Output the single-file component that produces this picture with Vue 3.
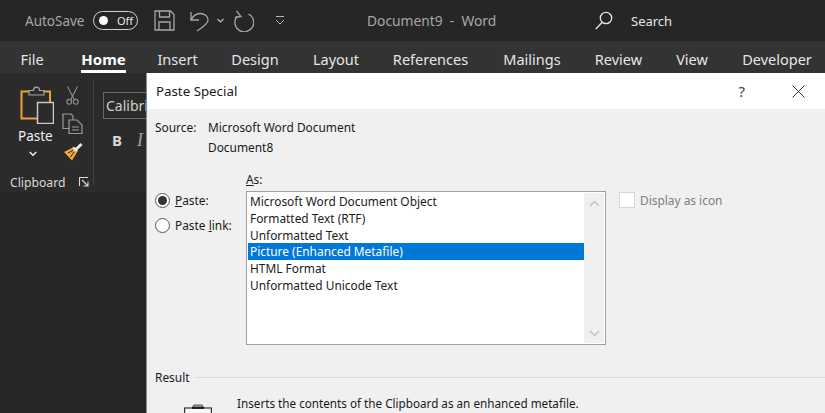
<script setup>
const tabs = [
  { label: 'File', w: 24, gap: 37 },
  { label: 'Home', w: 45, gap: 32, active: true },
  { label: 'Insert', w: 39, gap: 34 },
  { label: 'Design', w: 48, gap: 34 },
  { label: 'Layout', w: 46, gap: 35 },
  { label: 'References', w: 73, gap: 36 },
  { label: 'Mailings', w: 58, gap: 34 },
  { label: 'Review', w: 47, gap: 34 },
  { label: 'View', w: 32, gap: 33 },
  { label: 'Developer', w: 72, gap: 0 }
]
const formats = [
  'Microsoft Word Document Object',
  'Formatted Text (RTF)',
  'Unformatted Text',
  'Picture (Enhanced Metafile)',
  'HTML Format',
  'Unformatted Unicode Text'
]
</script>

<template>
  <div class="app">
    <header class="titlebar">
      <span class="autosave">AutoSave</span>
      <span class="toggle"><i class="knob"></i><span>Off</span></span>
      <svg class="save" width="21" height="21" viewBox="0 0 21 21" fill="none" stroke="#a6a6a6" stroke-width="1.3">
        <path d="M1 1h15.500L20 4.500V20H1z" />
        <path d="M5.500 1v6h10V1M5 20v-8h11v8" />
      </svg>
      <svg class="undo" width="20" height="22" viewBox="0 0 20 22" fill="none" stroke="#a6a6a6" stroke-width="1.3">
        <path d="M1 2v8h8" />
        <path d="M1 10c2-4 5-6.500 9-6.500 4.500 0 8 2.500 8 6.500 0 3-3 6-11 11" />
      </svg>
      <svg class="chev" width="7" height="5" viewBox="0 0 7 5" fill="none" stroke="#bdbdbd" stroke-width="1.200"><path d="M.5 1l3 3 3-3" /></svg>
      <svg class="redo" width="21" height="22" viewBox="0 0 21 22" fill="none" stroke="#a6a6a6" stroke-width="1.300">
        <path d="M3.500 1L8 6.500 2 7.500" />
        <path d="M4 6.500A9.400 9.400 0 1 0 15.500 4" />
      </svg>
      <svg class="custom" width="10" height="9" viewBox="0 0 10 9" fill="none" stroke="#b5b5b5" stroke-width="1">
        <path d="M1 .5h8M1 4l4 4 4-4" />
      </svg>
      <span class="doc">Document9 &nbsp;-&nbsp; Word</span>
      <svg class="search-icon" width="18" height="19" viewBox="0 0 18 19" fill="none" stroke="#e6e6e6" stroke-width="1.300">
        <circle cx="11" cy="7" r="5.700" />
        <path d="M7 11.500L.8 18" />
      </svg>
      <span class="search">Search</span>
    </header>

    <nav class="tabs">
      <span
        v-for="t in tabs"
        :key="t.label"
        class="tab"
        :class="{ active: t.active }"
        :style="{ width: t.w + 'px', marginRight: t.gap + 'px' }"
      >{{ t.label }}</span>
    </nav>

    <section class="ribbon">
      <div class="clipboard">
        <div class="clip-body">
          <div class="paste-col">
            <svg width="34" height="38" viewBox="0 0 34 38" fill="none">
              <path d="M9 5.500H1.500V32.500H17" stroke="#e8a33d" stroke-width="2" />
              <path d="M24 5.500h6V16" stroke="#e8a33d" stroke-width="2" />
              <path d="M9 9V4.500h4.500c0-4.500 6-4.500 6 0H24V9z" stroke="#a6a6a6" stroke-width="1.200" />
              <rect x="17.500" y="16.500" width="16" height="21" fill="#2b2b2b" stroke="#c8c8c8" stroke-width="1.500" />
            </svg>
            <span class="paste-label">Paste</span>
            <svg class="paste-chev" width="8" height="6" viewBox="0 0 8 6" fill="none" stroke="#f0f0f0" stroke-width="1.500"><path d="M.7 1l3.300 3.300L7.300 1" /></svg>
          </div>
          <div class="tools">
            <svg width="13" height="19" viewBox="0 0 13 19" fill="none" stroke="#8f8f8f" stroke-width="1.100">
              <path d="M1.500 .5L8.500 14M11.500 .5L4.500 14" />
              <circle cx="3.200" cy="15.800" r="2.400" />
              <circle cx="9.800" cy="15.800" r="2.400" />
            </svg>
            <svg width="21" height="21" viewBox="0 0 21 21" fill="none" stroke="#9a9a9a" stroke-width="1.200">
              <path d="M7 15.500H1V1h8l2 2v4" />
              <path d="M7 7h8l5 5v8.500H7z" />
              <path d="M10 14h7M10 17h7" />
            </svg>
            <svg width="20" height="19" viewBox="0 0 20 19" fill="none">
              <path d="M13.500 7L18.500 2" stroke="#e6e6e6" stroke-width="3" />
              <path d="M1 10l10-5 3.500 4.500L9 18.500z" fill="#eda73c" />
              <path d="M9.500 4.500l4 1.500 1.500 3.500-3.500-1z" fill="#f0f0f0" />
              <path d="M5 11l5-2.500M7.500 15l3.500-5" stroke="#2b2b2b" stroke-width="1" />
            </svg>
          </div>
        </div>
        <div class="clip-footer">
          <span>Clipboard</span>
          <svg width="10" height="10" viewBox="0 0 10 10" fill="none" stroke="#dcdcdc" stroke-width="1.100">
            <path d="M.5 9V.5H9" />
            <path d="M3 3l6 6M9 4.500V9H4.500" />
          </svg>
        </div>
      </div>
      <div class="font-group">
        <span class="font-box">Calibri</span>
        <div class="font-styles"><b>B</b><i>I</i></div>
      </div>
    </section>

    <main class="below"></main>

    <div class="dialog">
      <div class="dlg-head">
        <span class="dlg-title">Paste Special</span>
        <span class="help">?</span>
        <svg width="13" height="13" viewBox="0 0 13 13" stroke="#333" stroke-width="1" fill="none"><path d="M.5.500l12 12M12.500.500l-12 12" /></svg>
      </div>
      <div class="dlg-body">
        <div class="source">
          <span class="src-label">Source:</span>
          <div class="src-values">
            <span>Microsoft Word Document</span>
            <span>Document8</span>
          </div>
        </div>
        <div class="main-row">
          <div class="radios">
            <label class="radio"><i class="dot on"></i><span><u>P</u>aste:</span></label>
            <label class="radio"><i class="dot"></i><span>Paste <u>l</u>ink:</span></label>
          </div>
          <div class="as-col">
            <span class="as"><u>A</u>s:</span>
            <div class="listbox">
              <ul class="items">
                <li v-for="f in formats" :key="f" :class="{ sel: f.startsWith('Picture') }">{{ f }}</li>
              </ul>
              <div class="scroll">
                <svg width="11" height="7" viewBox="0 0 11 7" fill="none" stroke="#c0c0c0" stroke-width="1.500"><path d="M1 6l4.500-4.500L10 6" /></svg>
                <svg width="11" height="7" viewBox="0 0 11 7" fill="none" stroke="#c0c0c0" stroke-width="1.500"><path d="M1 1l4.500 4.500L10 1" /></svg>
              </div>
            </div>
          </div>
          <div class="icon-opt"><i class="check"></i><span>Display as icon</span></div>
        </div>
        <div class="result-head"><span>Result</span><i class="rule"></i></div>
        <div class="result-row">
          <svg class="res-icon" width="28" height="20" viewBox="0 0 28 20" fill="#f8f8f8" stroke="#333" stroke-width="1.200">
            <path d="M8 4l2-3h8l2 3" fill="#8a8a8a" stroke="#666" />
            <rect x=".6" y="4" width="26.800" height="20" />
            <path d="M8 4h12" stroke="#111" stroke-width="1.600" />
          </svg>
          <p>Inserts the contents of the Clipboard as an enhanced metafile.</p>
        </div>
      </div>
    </div>
  </div>
</template>

<style>
html, body { margin: 0; background: #262626; overflow: hidden; }
</style>

<style scoped>
.app {
  position: relative;
  width: 825px;
  height: 413px;
  overflow: hidden;
  display: flex;
  flex-direction: column;
  background: #262626;
  font-family: "Noto Sans", "Open Sans", sans-serif;
}
.titlebar {
  height: 41px;
  flex: none;
  display: flex;
  align-items: center;
  background: #262626;
  color: #a6a6a6;
  font-size: 14px;
}
.autosave { margin-left: 25px; width: 60px; font-size: 13.5px; white-space: nowrap; }
.toggle {
  margin-left: 8px;
  width: 45px;
  height: 19px;
  box-sizing: border-box;
  border: 1.3px solid #d0d0d0;
  border-radius: 10px;
  display: flex;
  align-items: center;
  color: #e6e6e6;
  font-size: 11px;
}
.knob { width: 9px; height: 9px; background: #fff; border-radius: 50%; margin: 0 9px 0 5px; }
.save { margin-left: 16px; }
.undo { margin-left: 15px; }
.chev { margin-left: 7px; }
.redo { margin-left: 9px; }
.custom { margin-left: 21px; }
.doc { margin-left: 82px; width: 228px; font-size: 13.8px; white-space: nowrap; }
.search { margin-left: 18px; color: #e6e6e6; font-size: 13px; }

.tabs {
  height: 32px;
  flex: none;
  padding-left: 20px;
  display: flex;
  align-items: center;
  background: #333;
  color: #e6e6e6;
  font-size: 14.5px;
  position: relative;
}
.tab { position: relative; height: 32px; line-height: 36px; white-space: nowrap; display: flex; justify-content: center; }
.tab.active { color: #fff; font-weight: 700; font-size: 15px; }
.tab.active::after {
  content: "";
  position: absolute;
  left: 0; right: 0; bottom: 0;
  height: 3px;
  background: #fff;
}

.ribbon {
  height: 119px;
  flex: none;
  display: flex;
  background: #2b2b2b;
  box-sizing: border-box;
  color: #e6e6e6;
}
.clipboard {
  width: 94px;
  flex: none;
  box-sizing: border-box;
  border-right: 1px solid #3f3f3f;
  margin: 6px 0 7px;
  display: flex;
  flex-direction: column;
}
.clip-body { display: flex; flex: 1; }
.paste-col {
  width: 62px;
  padding: 7px 0 0 20px;
  box-sizing: border-box;
  display: flex;
  flex-direction: column;
  align-items: flex-start;
}
.paste-label { font-size: 13.5px; line-height: 20px; margin: 2px 0 0 -2px; color: #f0f0f0; }
.paste-chev { margin: 5px 0 0 9px; }
.tools {
  display: flex;
  flex-direction: column;
  align-items: center;
  gap: 8px;
  width: 21px;
  padding-top: 7px;
}
.clip-footer {
  display: flex;
  align-items: center;
  justify-content: space-between;
  padding: 0 4px 0 10px;
  font-size: 12.2px;
  height: 20px;
  margin-bottom: -7px;
  color: #d9d9d9;
}
.font-group { margin-left: 9px; padding-top: 19px; }
.font-box {
  display: block;
  width: 60px;
  height: 27px;
  box-sizing: border-box;
  border: 1px solid #6a6a6a;
  padding-left: 2px;
  font-size: 14px;
  line-height: 25px;
  color: #d0d0d0;
}
.font-styles { display: flex; gap: 15px; padding: 11px 0 0 9px; font-size: 15px; color: #d9d9d9; }
.font-styles i { font-family: "Liberation Serif", serif; font-size: 18px; line-height: 20px; color: #a0a0a0; }
.below { flex: 1; background: #262626; }

.dialog {
  position: absolute;
  left: 146px;
  top: 73px;
  width: 679px;
  height: 340px;
  background: #f0f0f0;
  color: #1a1a1a;
  font-size: 11.9px;
  border-left: 1px solid #8a8a8a;
  box-sizing: border-box;
}
.dlg-head {
  height: 36px;
  background: #fff;
  display: flex;
  align-items: center;
  padding: 0 20px 0 9px;
  box-sizing: border-box;
}
.dlg-title { font-size: 13.3px; flex: 1; margin-top: -1px; }
.help { font-size: 15px; margin-right: 47px; color: #444; }
.dlg-body { padding: 9px 0 0 8px; }
.source { display: flex; height: 54px; }
.src-label { width: 53px; line-height: 18px; }
.src-values { display: flex; flex-direction: column; gap: 2px; line-height: 18px; margin-top: 0; }
.main-row { display: flex; height: 181px; }
.radios { width: 91px; padding-top: 20px; display: flex; flex-direction: column; gap: 9px; }
.radio { display: flex; align-items: center; gap: 5px; height: 16px; white-space: nowrap; }
.dot {
  width: 15px; height: 15px;
  box-sizing: border-box;
  background: #fff;
  border: 1px solid #555;
  border-radius: 50%;
  display: flex;
  align-items: center;
  justify-content: center;
  flex: none;
}
.dot.on::after { content: ""; width: 9px; height: 9px; background: #333; border-radius: 50%; }
.as-col { width: 360px; flex: none; }
.as { display: block; line-height: 18px; height: 18px; margin-top: -2px; }
.listbox {
  margin-top: 3px;
  height: 154px;
  box-sizing: border-box;
  border: 1px solid #a0a0a0;
  background: #fff;
  display: flex;
  padding: 1px;
}
.items { list-style: none; margin: 0; padding: 0; flex: 1; }
.items li { height: 16.8px; line-height: 16.8px; padding-left: 2px; white-space: nowrap; }
.items li.sel { background: #0078d7; color: #fff; }
.scroll {
  width: 20px;
  background: #f0f0f0;
  display: flex;
  flex-direction: column;
  align-items: center;
  justify-content: space-between;
  padding: 7px 0 6px;
  box-sizing: border-box;
}
.icon-opt { display: flex; gap: 5px; margin: 20px 0 0 13px; height: 16px; align-items: center; color: #7d7d7d; }
.check { width: 16px; height: 16px; box-sizing: border-box; background: #fff; border: 1px solid #d6d6d6; }
.result-head { display: flex; align-items: center; gap: 4px; margin-top: 15px; height: 18px; }
.rule { flex: 1; height: 1px; background: #dcdcdc; }
.result-row { display: flex; margin-top: 8px; }
.res-icon { margin: 10px 0 0 29px; flex: none; }
.result-row p { margin: 0 0 0 25px; line-height: 18px; font-size: 11.7px; }
</style>
